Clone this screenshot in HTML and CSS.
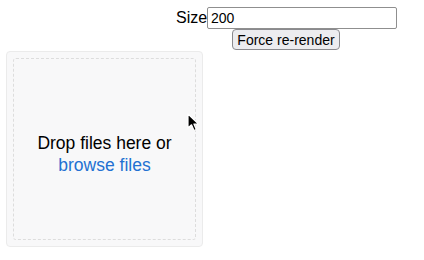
FILE: index.html
```html
<!DOCTYPE html>
<html>
<head>
<meta charset="utf-8">
<link rel="stylesheet" href="styles.css">
</head>
<body>
<div class="controls">
  <label class="size-row"><span class="size-label">Size</span><input class="size-input" type="text" value="200"></label>
  <button class="rerender">Force re-render</button>
</div>
<div class="dashboard">
  <div class="drop">
    <div class="drop-text">Drop files here or<br><span class="browse">browse files</span></div>
  </div>
  <svg class="cursor" width="14" height="20" viewBox="0 0 14 20"><path d="M1 1 L1 15 L4.5 11.8 L7 17.5 L9.3 16.5 L6.9 11 L11.5 11 Z" fill="#000" stroke="#fff" stroke-width="1.2" stroke-linejoin="round"/></svg>
</div>
</body>
</html>
```
FILE: styles.css
```css
html, body {
  margin: 0;
  padding: 0;
  background: #fff;
  font-family: "Liberation Sans", Arial, sans-serif;
}
.controls {
  display: flex;
  flex-direction: column;
  align-items: flex-start;
  padding: 7px 0 0 176px;
}
.size-row {
  display: flex;
  align-items: center;
  height: 22px;
}
.size-label {
  font-size: 16px;
  color: #000;
  width: 31px;
}
.size-input {
  box-sizing: border-box;
  width: 190px;
  height: 22px;
  border: 1px solid #8f8f8f;
  border-radius: 2px;
  padding: 1px 3px;
  font-family: "Liberation Sans", Arial, sans-serif;
  font-size: 14px;
  color: #000;
  margin: 0;
}
.rerender {
  margin: 0 0 0 56px;
  box-sizing: border-box;
  width: 108px;
  height: 21px;
  padding: 0 4px;
  border: 1px solid #8a8a8e;
  border-radius: 4px;
  background: #ececef;
  font-family: "Liberation Sans", Arial, sans-serif;
  font-size: 14px;
  color: #000;
  line-height: 18px;
}
.dashboard {
  position: relative;
  box-sizing: border-box;
  margin: 1px 0 0 6px;
  width: 197px;
  height: 196px;
  background: #f8f8f9;
  border: 1px solid #ebebeb;
  border-radius: 4px;
  padding: 6px;
}
.drop {
  box-sizing: border-box;
  height: 100%;
  border: 1px dashed #dddddd;
  border-radius: 3px;
  display: flex;
  align-items: center;
  justify-content: center;
}
.drop-text {
  text-align: center;
  font-size: 17.5px;
  line-height: 22px;
  color: #000;
  margin-top: 9px;
}
.browse {
  color: #2371d2;
}
.cursor {
  position: absolute;
  left: 180px;
  top: 61px;
}
```
